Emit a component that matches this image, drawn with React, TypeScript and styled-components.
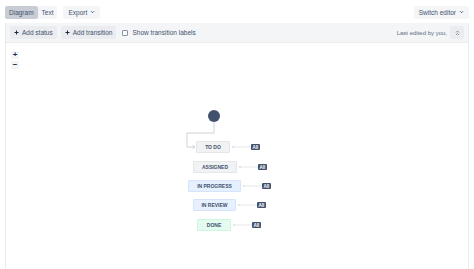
import styled, { createGlobalStyle } from "styled-components";

const GlobalStyle = createGlobalStyle`
  html, body {
    margin: 0;
    padding: 0;
    background: #ffffff;
  }
  body {
    font-family: "Liberation Sans", Arial, sans-serif;
    color: #172b4d;
  }
  * {
    box-sizing: border-box;
  }
`;

const Page = styled.div`
  height: 100vh;
  padding: 5px 5px 0 5px;
  display: flex;
  flex-direction: column;
  gap: 4px;
  overflow: hidden;
`;

const TopBar = styled.div`
  height: 14px;
  display: flex;
  align-items: center;
  justify-content: space-between;
`;

const Group = styled.div`
  display: flex;
  align-items: center;
  gap: ${(p: { gap?: number }) => p.gap ?? 0}px;
`;

const Tab = styled.div<{ active?: boolean }>`
  height: 13px;
  padding: 0 4px;
  display: flex;
  align-items: center;
  font-size: 6.5px;
  border-radius: 2px;
  color: #42526e;
  background: ${(p) => (p.active ? "#c8ccd4" : "#f4f5f7")};
`;

const Dropdown = styled.div`
  height: 13px;
  padding: 0 5px;
  display: flex;
  align-items: center;
  gap: 3px;
  font-size: 6.5px;
  border-radius: 2px;
  color: #42526e;
  background: #f4f5f7;
`;

const Editor = styled.div`
  flex: 1;
  display: flex;
  flex-direction: column;
  border-left: 1px solid #ebecf0;
  border-right: 1px solid #ebecf0;
`;

const Toolbar = styled.div`
  height: 20px;
  background: #f4f5f7;
  display: flex;
  align-items: center;
  justify-content: space-between;
  padding: 0 4px;
  border-bottom: 1px solid #ebecf0;
`;

const ToolButton = styled.div`
  height: 13px;
  padding: 0 4px;
  display: flex;
  align-items: center;
  gap: 3px;
  font-size: 6.5px;
  color: #42526e;
  background: #ebecf0;
  border-radius: 2px;
`;

const CheckLabel = styled.label`
  display: flex;
  align-items: center;
  gap: 4px;
  font-size: 6.5px;
  color: #42526e;
  margin-left: 2px;
`;

const Box = styled.span`
  width: 6px;
  height: 6px;
  border: 1px solid #8993a4;
  border-radius: 1px;
  background: #fff;
`;

const Edited = styled.span`
  font-size: 6px;
  color: #5e6c84;
`;

const IconButton = styled.div`
  width: 14px;
  height: 13px;
  display: flex;
  align-items: center;
  justify-content: center;
  background: #ebecf0;
  border-radius: 2px;
`;

const Canvas = styled.div`
  flex: 1;
  position: relative;
`;

const ZoomControls = styled.div`
  position: absolute;
  left: 5px;
  top: 8px;
  display: flex;
  flex-direction: column;
  gap: 2px;
`;

const ZoomButton = styled.div`
  width: 8px;
  height: 8px;
  display: flex;
  align-items: center;
  justify-content: center;
  font-size: 8px;
  font-weight: bold;
  color: #172b4d;
  background: #f4f5f7;
  line-height: 1;
`;

const Edges = styled.svg`
  position: absolute;
  left: 0;
  top: 0;
`;

type Tone = "todo" | "progress" | "done";

const toneBg: Record<Tone, string> = {
  todo: "#f1f2f4",
  progress: "#e7f0fe",
  done: "#e3fcef",
};

const toneBorder: Record<Tone, string> = {
  todo: "#e4e6ea",
  progress: "#d6e4fb",
  done: "#cdf5df",
};

const Status = styled.div<{ tone: Tone }>`
  position: absolute;
  height: 12px;
  display: flex;
  align-items: center;
  justify-content: center;
  font-size: 5px;
  font-weight: bold;
  color: #42526e;
  background: ${(p) => toneBg[p.tone]};
  border: 1px solid ${(p) => toneBorder[p.tone]};
  border-radius: 1px;
  white-space: nowrap;
`;

const Badge = styled.div`
  position: absolute;
  width: 9px;
  height: 6px;
  display: flex;
  align-items: center;
  justify-content: center;
  font-size: 4.5px;
  font-weight: bold;
  color: #fff;
  background: #42526e;
  border-radius: 1px;
`;

const Chevron = ({ color = "#42526e" }: { color?: string }) => (
  <svg width="5" height="4" viewBox="0 0 5 4">
    <path d="M1 1.2 L2.5 2.7 L4 1.2" stroke={color} strokeWidth="0.9" fill="none" />
  </svg>
);

const Plus = () => (
  <svg width="5" height="5" viewBox="0 0 5 5">
    <path d="M2.5 0.5 V4.5 M0.5 2.5 H4.5" stroke="#172b4d" strokeWidth="1" />
  </svg>
);

const statuses: { name: string; tone: Tone; x: number; y: number; w: number; badge: number }[] = [
  { name: "TO DO", tone: "todo", x: 190, y: 98, w: 34, badge: 245 },
  { name: "ASSIGNED", tone: "todo", x: 187, y: 118, w: 44, badge: 252 },
  { name: "IN PROGRESS", tone: "progress", x: 182, y: 137, w: 53, badge: 256 },
  { name: "IN REVIEW", tone: "progress", x: 187, y: 156, w: 43, badge: 251 },
  { name: "DONE", tone: "done", x: 191, y: 176, w: 34, badge: 246 },
];

export default function App() {
  return (
    <>
      <GlobalStyle />
      <Page>
        <TopBar>
          <Group gap={6}>
            <Group>
              <Tab active>Diagram</Tab>
              <Tab>Text</Tab>
            </Group>
            <Dropdown>
              Export <Chevron />
            </Dropdown>
          </Group>
          <Dropdown>
            Switch editor <Chevron />
          </Dropdown>
        </TopBar>
        <Editor>
          <Toolbar>
            <Group gap={4}>
              <ToolButton>
                <Plus /> Add status
              </ToolButton>
              <ToolButton>
                <Plus /> Add transition
              </ToolButton>
              <CheckLabel>
                <Box /> Show transition labels
              </CheckLabel>
            </Group>
            <Group gap={3}>
              <Edited>Last edited by you,</Edited>
              <IconButton>
                <svg width="5" height="6" viewBox="0 0 5 6">
                  <path d="M1 2.5 L2.5 1 L4 2.5 M1 5 L2.5 3.5 L4 5" stroke="#5e6c84" strokeWidth="0.7" fill="none" />
                </svg>
              </IconButton>
            </Group>
          </Toolbar>
          <Canvas>
            <ZoomControls>
              <ZoomButton>+</ZoomButton>
              <ZoomButton>−</ZoomButton>
            </ZoomControls>
            <Edges width="464" height="230">
              <circle cx="208" cy="73" r="6" fill="#42526e" />
              <path d="M208 79 V90 H181 V104 H188" stroke="#c1c7d0" strokeWidth="0.8" fill="none" />
              <path d="M186.5 102.5 L189 104 L186.5 105.5" stroke="#c1c7d0" strokeWidth="0.8" fill="none" />
              {statuses.map((s) => {
                const cy = s.y + 6;
                const x1 = s.x + s.w;
                return (
                  <g key={s.name}>
                    <path d={`M${s.badge} ${cy} H${x1 + 2}`} stroke="#dfe1e6" strokeWidth="0.8" />
                    <circle cx={x1 + 3} cy={cy} r="1" fill="#dfe1e6" />
                  </g>
                );
              })}
            </Edges>
            {statuses.map((s) => (
              <Status key={s.name} tone={s.tone} style={{ left: s.x, top: s.y, width: s.w }}>
                {s.name}
              </Status>
            ))}
            {statuses.map((s) => (
              <Badge key={s.name} style={{ left: s.badge, top: s.y + 3 }}>
                All
              </Badge>
            ))}
          </Canvas>
        </Editor>
      </Page>
    </>
  );
}
